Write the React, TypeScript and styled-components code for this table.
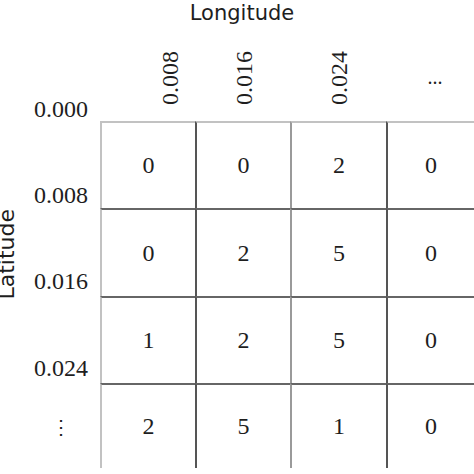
import styled, { createGlobalStyle } from "styled-components";

const GlobalStyle = createGlobalStyle`
  html, body {
    margin: 0;
    background: #fff;
  }
`;

const Page = styled.div`
  width: 474px;
  height: 474px;
  display: grid;
  grid-template-columns: 100px 1fr;
  grid-template-rows: 26px 95px 1fr;
  overflow: hidden;
  color: #1e1e1e;
`;

const Title = styled.div`
  grid-column: 1 / -1;
  text-align: center;
  padding-left: 10px;
  font-family: "DejaVu Sans", sans-serif;
  font-size: 21px;
  line-height: 26px;
`;

const Side = styled.div`
  grid-column: 1;
  grid-row: 2 / 4;
  display: grid;
  grid-template-columns: 30px 1fr;
`;

const AxisLabel = styled.div`
  writing-mode: vertical-rl;
  transform: rotate(180deg);
  align-self: center;
  justify-self: start;
  margin: 8px 0 0 -3px;
  font-family: "DejaVu Sans", sans-serif;
  font-size: 22px;
  line-height: 20px;
`;

const RowLabels = styled.div`
  display: flex;
  flex-direction: column;
  align-items: flex-end;
  padding: 70px 12px 0 0;
`;

const RowLabel = styled.div<{ $h: number; $pad?: number }>`
  height: ${(p) => p.$h}px;
  padding-right: ${(p) => p.$pad ?? 0}px;
  font-family: "Liberation Serif", serif;
  font-size: 24px;
  line-height: 26px;
`;

const VDots = styled(RowLabel)`
  font-family: "DejaVu Serif", serif;
  font-size: 20px;
`;

const Header = styled.div`
  grid-column: 2;
  grid-row: 2;
  display: grid;
  grid-template-columns: 95px 95px 96px 1fr;
  align-items: end;
  padding-bottom: 16px;
`;

const ColLabel = styled.div<{ $shift: number }>`
  justify-self: center;
  margin-left: ${(p) => p.$shift * 2}px;
  writing-mode: vertical-rl;
  transform: rotate(180deg);
  font-family: "Liberation Serif", serif;
  font-size: 24px;
  line-height: 23px;
`;

const Ellipsis = styled.div<{ $shift: number }>`
  justify-self: center;
  align-self: center;
  margin-left: ${(p) => p.$shift * 2}px;
  margin-top: 22px;
  font-family: "Liberation Serif", serif;
  font-size: 20px;
  line-height: 20px;
`;

const Table = styled.div`
  grid-column: 2;
  grid-row: 3;
  align-self: start;
  display: grid;
  grid-template-columns: 95px 95px 96px 1fr;
  grid-template-rows: 87px 88px 87px 85px;
`;

const Cell = styled.div<{ $top: string; $left: string }>`
  display: flex;
  align-items: center;
  justify-content: center;
  border-top: 2px solid ${(p) => p.$top};
  border-left: 2px solid ${(p) => p.$left};
  font-family: "Liberation Serif", serif;
  font-size: 24px;
`;

const counts = [
  [0, 0, 2, 0],
  [0, 2, 5, 0],
  [1, 2, 5, 0],
  [2, 5, 1, 0],
];

const colLines = ["#c2c2c2", "#555", "#9a9a9a", "#555"];

export default function App() {
  return (
    <>
      <GlobalStyle />
      <Page>
        <Title>Longitude</Title>
        <Side>
          <AxisLabel>Latitude</AxisLabel>
          <RowLabels>
            <RowLabel $h={86}>0.000</RowLabel>
            <RowLabel $h={86}>0.008</RowLabel>
            <RowLabel $h={87}>0.016</RowLabel>
            <RowLabel $h={59}>0.024</RowLabel>
            <VDots $h={26} $pad={17}>⋮</VDots>
          </RowLabels>
        </Side>
        <Header>
          <ColLabel $shift={23}>0.008</ColLabel>
          <ColLabel $shift={2}>0.016</ColLabel>
          <ColLabel $shift={1}>0.024</ColLabel>
          <Ellipsis $shift={5}>...</Ellipsis>
        </Header>
        <Table>
          {counts.map((row, r) =>
            row.map((n, c) => (
              <Cell key={`${r}-${c}`} $top={r === 0 ? "#c2c2c2" : "#666"} $left={colLines[c]}>
                {n}
              </Cell>
            ))
          )}
        </Table>
      </Page>
    </>
  );
}
